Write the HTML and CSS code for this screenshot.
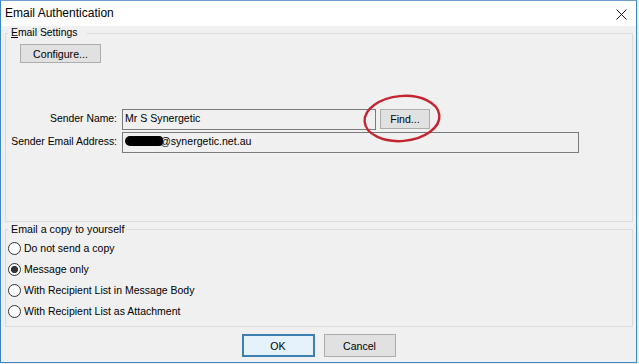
FILE: index.html
```html
<!DOCTYPE html>
<html>
<head>
<meta charset="utf-8">
<link rel="stylesheet" href="styles.css">
</head>
<body>
<div class="window">
  <div class="titlebar">
    <span class="title">Email Authentication</span>
    <svg class="close" width="11" height="11" viewBox="0 0 11 11"><path d="M0.5 0.5 L10.5 10.5 M10.5 0.5 L0.5 10.5" stroke="#111" stroke-width="1" fill="none"/></svg>
  </div>
  <div class="client">
    <fieldset class="group group-settings">
      <legend class="legend legend-settings"><u>E</u>mail Settings</legend>
      <button class="btn btn-configure">Configure...</button>
      <div class="form">
        <label class="lbl">Sender Name:</label>
        <div class="row">
          <div class="field field-name">Mr S Synergetic</div>
          <button class="btn btn-find">Find...</button>
        </div>
        <label class="lbl">Sender Email Address:</label>
        <div class="field field-email"><span class="redact"></span>@synergetic.net.au</div>
      </div>
    </fieldset>
    <fieldset class="group group-copy">
      <legend class="legend legend-copy">Email a copy to yourself</legend>
      <div class="radio-row"><span class="radio"></span><span>Do not send a copy</span></div>
      <div class="radio-row"><span class="radio checked"></span><span>Message only</span></div>
      <div class="radio-row"><span class="radio"></span><span>With Recipient List in Message Body</span></div>
      <div class="radio-row"><span class="radio"></span><span>With Recipient List as Attachment</span></div>
    </fieldset>
    <div class="actions">
      <button class="btn btn-ok">OK</button>
      <button class="btn btn-cancel">Cancel</button>
    </div>
  </div>
  <svg class="annotation" width="86" height="54" viewBox="0 0 86 54"><ellipse cx="42" cy="26.5" rx="37.5" ry="22.5" transform="rotate(-5 42 26.5)" fill="none" stroke="#c42430" stroke-width="2.4"/></svg>
</div>
</body>
</html>
```
FILE: styles.css
```css
html, body {
  margin: 0;
  padding: 0;
}
body {
  background: #e9eef3;
  font-family: "Liberation Sans", Arial, sans-serif;
  color: #000;
  width: 639px;
  height: 364px;
  overflow: hidden;
}
.window {
  position: relative;
  box-sizing: border-box;
  width: 637px;
  height: 363px;
  border: 1px solid #3d86c6;
  border-top-color: #6d9fcf;
  background: #f0f0f0;
  display: flex;
  flex-direction: column;
}
.titlebar {
  height: 25px;
  background: #fff;
  display: flex;
  align-items: center;
  justify-content: space-between;
  padding-left: 4px;
  padding-right: 9px;
}
.title {
  font-size: 12px;
  line-height: 25px;
}
.close {
  display: block;
  margin-top: 1px;
}
.client {
  flex: 1;
  display: flex;
  flex-direction: column;
  font-size: 10.4px;
}
.group {
  margin: 0 3px 0 4px;
  border: 1px solid #dcdcdc;
  padding: 0;
  min-width: 0;
}
.legend {
  font-size: 10.4px;
  line-height: 14px;
  margin-left: 2px;
  padding: 0 2px 0 3px;
}
.legend-settings {
  padding-right: 10px;
}
.legend-copy {
  font-size: 10.7px;
}
.legend u {
  text-decoration-thickness: 1px;
  text-underline-offset: 1px;
}
.group-settings {
  padding-top: 4px;
  padding-bottom: 68px;
}
.btn {
  box-sizing: border-box;
  font-family: "Liberation Sans", Arial, sans-serif;
  font-size: 10.6px;
  color: #000;
  background: #e1e1e1;
  border: 1px solid #adadad;
  padding: 0;
  margin: 0;
  line-height: 16px;
  border-radius: 0;
}
.btn-configure {
  display: block;
  width: 81px;
  height: 19px;
  margin-left: 14px;
}
.form {
  margin-top: 46px;
  display: grid;
  grid-template-columns: 111px auto;
  column-gap: 5px;
  row-gap: 2px;
  justify-content: start;
}
.lbl {
  line-height: 19px;
  padding-bottom: 2px;
  text-align: right;
  white-space: nowrap;
}
.row {
  display: flex;
  align-items: flex-start;
  gap: 4px;
}
.field {
  box-sizing: border-box;
  height: 21px;
  border: 1px solid #7a7a7a;
  background: #f0f0f0;
  font-size: 10.6px;
  line-height: 17px;
  padding: 0 0 2px 2px;
  white-space: nowrap;
}
.field-name {
  width: 254px;
}
.btn-find {
  width: 50px;
  height: 20px;
}
.field-email {
  width: 457px;
}
.redact {
  display: inline-block;
  width: 38px;
  height: 10px;
  background: #000;
  border-radius: 5px 4px 4px 5px;
  vertical-align: -1px;
  margin-right: -3px;
}
.group-copy {
  padding-top: 2px;
  padding-bottom: 4px;
}
.radio-row {
  height: 21px;
  display: flex;
  align-items: center;
  gap: 3px;
  font-size: 10.5px;
  line-height: 21px;
  padding-left: 2px;
  white-space: nowrap;
}
.radio {
  box-sizing: border-box;
  width: 13px;
  height: 13px;
  border-radius: 50%;
  border: 1px solid #333;
  background: #fff;
  flex: none;
}
.radio.checked {
  background: radial-gradient(circle, #333 0 3.3px, #fff 3.9px);
}
.actions {
  margin-top: 7px;
  display: flex;
  justify-content: center;
  gap: 9px;
}
.btn-ok {
  width: 73px;
  height: 23px;
  border: 2px solid #3c7fb1;
  background: #e5f1fb;
}
.btn-cancel {
  width: 72px;
  height: 23px;
}
.annotation {
  position: absolute;
  left: 359px;
  top: 91px;
}
```
